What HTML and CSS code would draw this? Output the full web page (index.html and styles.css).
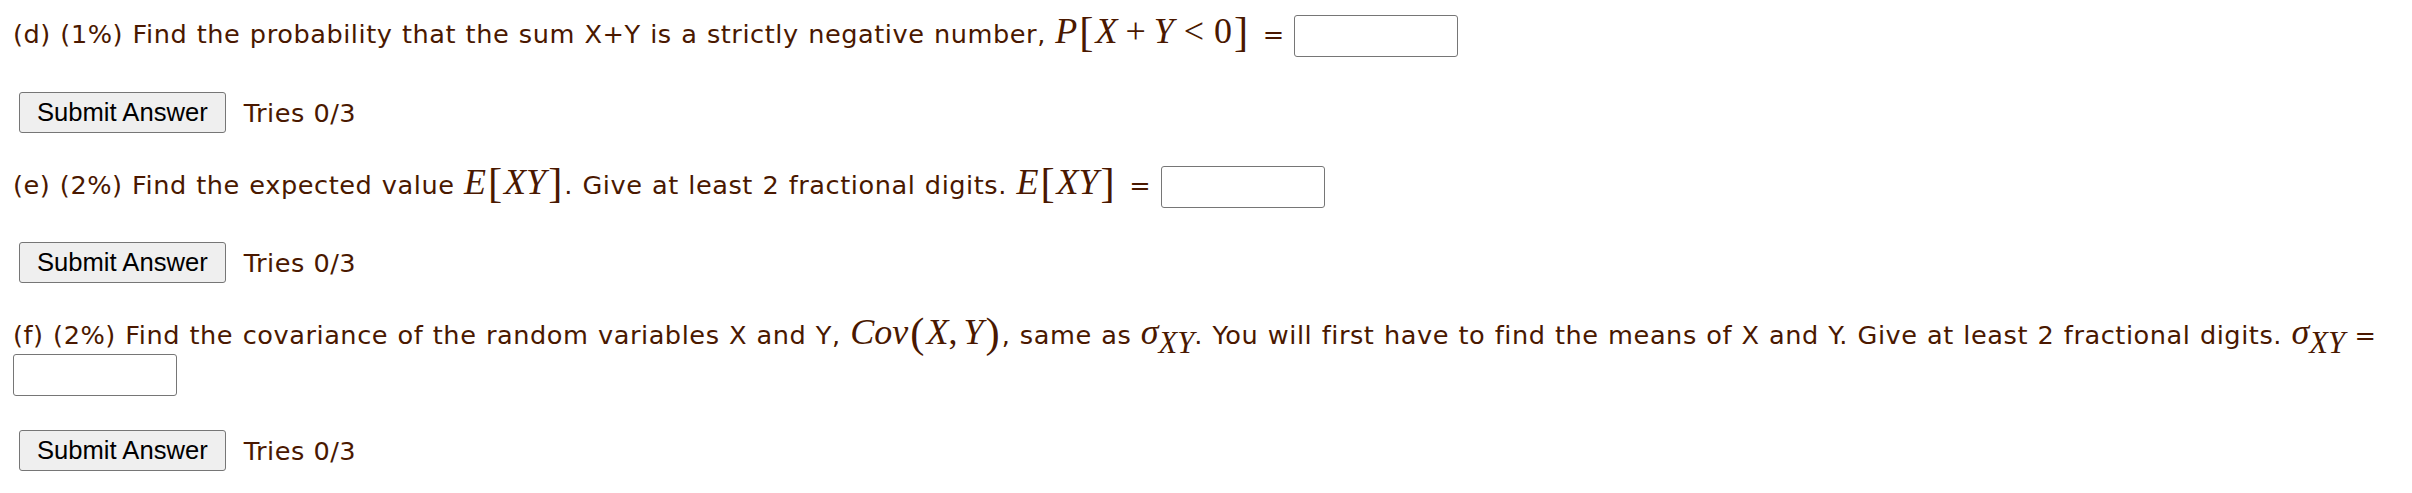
FILE: index.html
```html
<!DOCTYPE html>
<html lang="en">
<head>
<meta charset="utf-8">
<title>Problem</title>
<link rel="stylesheet" href="styles.css">
</head>
<body>
<div class="page">
  <p class="q q-d">(d) (1%) Find the probability that the sum X+Y is a strictly negative number, <span class="math m-d"><i>P</i><span class="br">[</span><i>X</i><span class="bin">+</span><i>Y</i><span class="rel">&lt;</span>0<span class="br">]</span></span> = <input class="ans" type="text"></p>
  <div class="submit s-d"><button type="button" class="btn">Submit Answer</button><span class="tries">Tries 0/3</span></div>

  <p class="q q-e">(e) (2%) Find the expected value <span class="math m-e"><i>E</i><span class="br">[</span><i>X</i><i>Y</i><span class="br">]</span></span>. Give at least 2 fractional digits. <span class="math m-e2"><i>E</i><span class="br">[</span><i>X</i><i>Y</i><span class="br">]</span></span> = <input class="ans" type="text"></p>
  <div class="submit s-e"><button type="button" class="btn">Submit Answer</button><span class="tries">Tries 0/3</span></div>

  <p class="q q-f">(f) (2%) Find the covariance of the random variables X and Y, <span class="math m-f"><i>C</i><i>o</i><i>v</i><span class="br">(</span><i>X</i><span class="comma">,</span><i>Y</i><span class="br">)</span></span>, same as <span class="math m-s"><i>σ</i><sub><i>X</i><i>Y</i></sub></span>. You will first have to find the means of X and Y. Give at least 2 fractional digits. <span class="math m-s"><i>σ</i><sub><i>X</i><i>Y</i></sub></span> = <br><input class="ans" type="text"></p>
  <div class="submit s-f"><button type="button" class="btn">Submit Answer</button><span class="tries">Tries 0/3</span></div>
</div>
</body>
</html>
```

FILE: styles.css
```css
html, body {
  margin: 0;
  background: #ffffff;
}

body {
  color: #4a1800;
  font-family: "DejaVu Sans", Verdana, sans-serif;
  font-size: 25.6px;
}

.page {
  padding: 15px 13px 0 13px;
}

.q {
  margin: 0;
  line-height: 37px;
  letter-spacing: 0.55px;
  word-spacing: 0.8px;
}

.q-d { margin-bottom: 35px; }
.q-e { margin-bottom: 34px; }
.q-f { margin-bottom: 34px; }

.math {
  font-family: "Liberation Serif", "DejaVu Serif", serif;
  font-size: 36px;
  line-height: 0;
  white-space: nowrap;
  word-spacing: 0;
  letter-spacing: 0;
}

.math i {
  font-style: italic;
}

.br {
  font-size: 1.18em;
  vertical-align: -0.07em;
  font-style: normal;
  margin: 0 2px;
}

.bin {
  margin: 0 0.222em;
}

.rel {
  margin: 0 0.278em;
}

.comma {
  margin-right: 0.17em;
}

.m-d { margin-right: 3px; }
.m-e2 { margin-right: 3px; }

.m-s sub {
  font-size: 0.85em;
  vertical-align: -0.3em;
  line-height: 0;
}

.ans {
  box-sizing: border-box;
  width: 164px;
  height: 42px;
  margin: 0;
  padding: 2px 4px;
  border: 1.5px solid #767676;
  border-radius: 3px;
  background: #ffffff;
  font-size: 21px;
  letter-spacing: 0;
  vertical-align: middle;
}

.submit {
  display: flex;
  align-items: center;
  gap: 18px;
  margin: 0 0 33px 6px;
}

.s-e { margin-bottom: 34px; }

.btn {
  box-sizing: border-box;
  height: 41px;
  padding: 0 17px;
  margin: 0;
  border: 1.5px solid #767676;
  border-radius: 3px;
  background: #efefef;
  color: #000000;
  font-family: "Liberation Sans", Arial, sans-serif;
  font-size: 25.6px;
}

.tries {
  line-height: normal;
  letter-spacing: 0.5px;
}
```
